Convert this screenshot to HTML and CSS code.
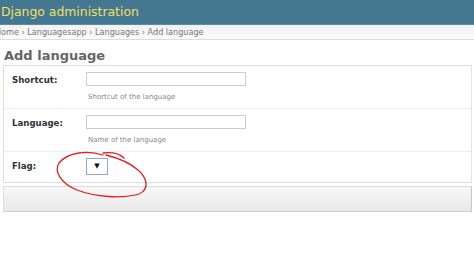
FILE: index.html
```html
<!DOCTYPE html>
<html>
<head>
<meta charset="utf-8">
<link rel="stylesheet" href="styles.css">
</head>
<body>
<div class="header"><span class="brand">Django administration</span></div>
<div class="breadcrumbs"><span class="crumbs">Home › Languagesapp › Languages › Add language</span></div>
<div class="content">
  <h1 class="title">Add language</h1>
  <div class="fieldset">
    <div class="row">
      <label class="label">Shortcut:</label>
      <div class="field">
        <div class="input"></div>
        <div class="help">Shortcut of the language</div>
      </div>
    </div>
    <div class="row">
      <label class="label">Language:</label>
      <div class="field">
        <div class="input"></div>
        <div class="help">Name of the language</div>
      </div>
    </div>
    <div class="row row-flag">
      <label class="label">Flag:</label>
      <div class="field">
        <div class="select">▼</div>
      </div>
    </div>
  </div>
  <div class="submit-row"></div>
</div>
<svg class="scribble" width="474" height="266" viewBox="0 0 474 266">
  <path d="M103 155 C 88 150, 68 152, 59 163 C 54 171, 60 183, 77 190 C 95 197, 122 199, 139 194 C 150 189, 147 178, 138 170 C 130 163, 118 158, 106 155 M 103 153 C 112 152, 120 154, 124 158" fill="none" stroke="#e02020" stroke-width="1.3" stroke-linecap="round"/>
</svg>
</body>
</html>
```
FILE: styles.css
```css
html, body {
  margin: 0;
  padding: 0;
  background: #fff;
  width: 474px;
  height: 266px;
  overflow: hidden;
  font-family: "DejaVu Sans", Verdana, sans-serif;
}
.header {
  height: 25px;
  background: #447790;
  display: flex;
  align-items: center;
  padding-left: 1px;
  border-bottom: 1px solid #5f8aa1;
  box-sizing: border-box;
}
.brand {
  color: #f3e05f;
  font-size: 12.4px;
  margin-top: -2px;
}
.breadcrumbs {
  height: 14px;
  background: linear-gradient(#f1f1f1, #fbfbfb);
  border-bottom: 1px solid #dcdcdc;
  display: flex;
  align-items: center;
  overflow: hidden;
}
.crumbs {
  color: #777;
  font-size: 8.1px;
  margin-left: -5px;
  white-space: nowrap;
}
.content {
  padding: 0 2px 0 3px;
}
.title {
  margin: 7px 0 0 1px;
  font-size: 13px;
  font-weight: bold;
  color: #666;
  height: 18px;
  line-height: 18px;
}
.fieldset {
  border: 1px solid #ddd;
  border-right-color: #e4e4e4;
}
.row {
  display: flex;
  border-bottom: 1px solid #eee;
  height: 43px;
  box-sizing: border-box;
}
.row:last-child {
  border-bottom: none;
  height: 30px;
}
.label {
  width: 74px;
  padding-left: 8px;
  padding-top: 9px;
  font-size: 8.6px;
  font-weight: bold;
  color: #333;
  flex: none;
}
.field {
  padding-top: 6px;
}
.input {
  width: 158px;
  height: 12px;
  border: 1px solid #ccc;
}
.help {
  font-size: 7px;
  color: #888;
  margin-top: 7px;
  padding-left: 2px;
}
.select {
  width: 20px;
  height: 15px;
  border: 1px solid #8fa8d6;
  margin-top: 0;
  font-size: 7px;
  line-height: 15px;
  text-align: center;
  color: #111;
}
.submit-row {
  margin-top: 3px;
  height: 24px;
  border: 1px solid #ddd;
  border-right-color: #c8c8c8;
  border-bottom-color: #cfcfcf;
  background: linear-gradient(#f8f8f8, #e8e8e8);
}
.scribble {
  position: absolute;
  left: 0;
  top: 0;
  pointer-events: none;
}
```
